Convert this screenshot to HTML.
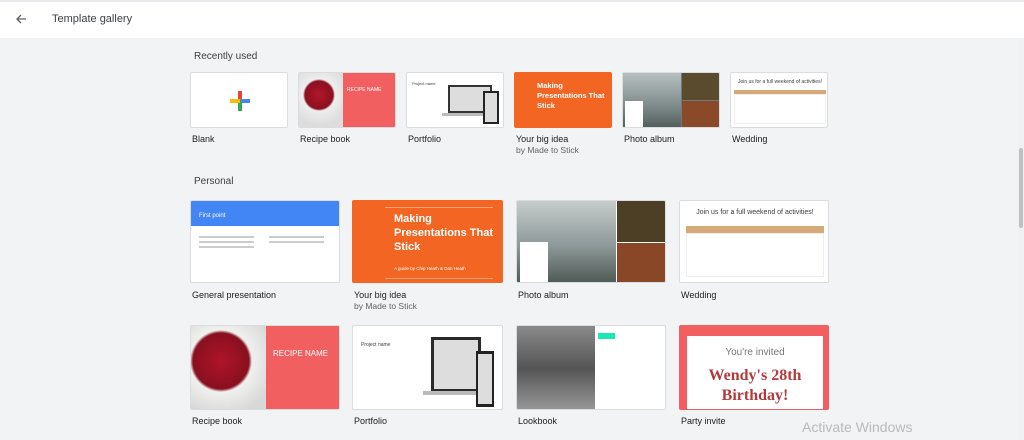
<!DOCTYPE html>
<html><head><meta charset="utf-8"><style>
*{margin:0;padding:0;box-sizing:border-box}
body{width:1024px;height:440px;overflow:hidden;background:#f1f3f4;font-family:"Liberation Sans",Arial,sans-serif;color:#3c4043;position:relative}
.top{position:absolute;left:0;top:0;width:1024px;height:2px;background:#e8eaed}
.hdr{position:absolute;left:0;top:2px;width:1024px;height:36px;background:#fff}
.hdr .t{position:absolute;left:52px;top:11px;font-size:11px;color:#3c4043}
.sec{position:absolute;left:194px;font-size:10px;color:#3c4043}
.c{position:absolute;background:#fff;border:1px solid #dadce0;border-radius:2px;overflow:hidden}
.l{position:absolute;font-size:9px;color:#202124}
.s{position:absolute;font-size:8.5px;color:#5f6368}
.sb{position:absolute;right:0;top:38px;width:6px;height:402px;background:#f1f1f1}
.sb div{position:absolute;left:1px;top:110px;width:4px;height:80px;background:#c1c1c1;border-radius:2px}
.ln{height:2px;background:#ccc;margin:3px 0}
</style></head><body>
<div class="top"></div>
<div class="hdr">
<svg style="position:absolute;left:15px;top:11px" width="12" height="12" viewBox="0 0 12 12"><path d="M11 6H2M6 2L2 6l4 4" stroke="#5f6368" stroke-width="1.3" fill="none"/></svg>
<div class="t">Template gallery</div></div>
<div class="sb"><div></div></div>
<div class="sec" style="top:51px">Recently used</div>
<div class="sec" style="top:176px">Personal</div>

<!-- Recently used -->
<div class="c" style="left:190px;top:72px;width:98px;height:56px">
<svg style="position:absolute;left:38px;top:17px" width="22" height="22" viewBox="0 0 22 22"><rect x="9" y="1" width="4" height="10" fill="#ea4335"/><rect x="11" y="9" width="10" height="4" fill="#4285f4"/><rect x="9" y="11" width="4" height="10" fill="#34a853"/><rect x="1" y="9" width="10" height="4" fill="#fbbc04"/></svg></div>
<div class="c" style="left:298px;top:72px;width:98px;height:56px;background:#f3e9e4">
<div style="position:absolute;left:0;top:0;width:44px;height:56px;background:radial-gradient(circle at 20px 22px,#b2162a 0,#8a1020 14px,#eee 16px,#ddd 30px)"></div>
<div style="position:absolute;left:44px;top:0;width:54px;height:56px;background:#f15f60;color:#fff;font-size:5px;padding:14px 4px">RECIPE NAME</div></div>
<div class="c" style="left:406px;top:72px;width:98px;height:56px">
<div style="position:absolute;left:5px;top:8px;font-size:4px">Project name</div>
<div style="position:absolute;left:41px;top:12px;width:44px;height:28px;background:#333;border:2px solid #333"><div style="background:#ddd;height:100%"></div></div>
<div style="position:absolute;left:35px;top:40px;width:55px;height:3px;background:#bbb"></div>
<div style="position:absolute;left:76px;top:18px;width:16px;height:33px;background:#222;border:2px solid #222"><div style="background:#ddd;height:100%"></div></div></div>
<div class="c" style="left:514px;top:72px;width:98px;height:56px;background:#f26522;border-color:#f26522">
<div style="position:absolute;left:22px;top:8px;color:#fff;font-size:7.5px;font-weight:bold;line-height:10px">Making<br>Presentations That<br>Stick</div></div>
<div class="c" style="left:622px;top:72px;width:98px;height:56px;background:#6f7a7c">
<div style="position:absolute;left:0;top:0;width:58px;height:56px;background:linear-gradient(#b7c0c1,#7e8a8a 60%,#4f5a58)"></div>
<div style="position:absolute;left:59px;top:0;width:39px;height:27px;background:#5a4a2e"></div>
<div style="position:absolute;left:59px;top:28px;width:39px;height:28px;background:#8a4a2a"></div>
<div style="position:absolute;left:2px;top:28px;width:18px;height:26px;background:#fff"></div></div>
<div class="c" style="left:730px;top:72px;width:98px;height:56px">
<div style="position:absolute;left:0;top:6px;width:98px;text-align:center;font-size:5px">Join us for a full weekend of activities!</div>
<div style="position:absolute;left:3px;top:17px;width:92px;height:4px;background:#d4aa78"></div>
<div style="position:absolute;left:3px;top:21px;width:92px;height:30px;border:1px solid #eee"></div></div>
<div class="l" style="left:192px;top:134px">Blank</div>
<div class="l" style="left:300px;top:134px">Recipe book</div>
<div class="l" style="left:408px;top:134px">Portfolio</div>
<div class="l" style="left:516px;top:134px">Your big idea</div>
<div class="s" style="left:516px;top:145px">by Made to Stick</div>
<div class="l" style="left:624px;top:134px">Photo album</div>
<div class="l" style="left:732px;top:134px">Wedding</div>

<!-- Personal row 1 -->
<div class="c" style="left:190px;top:200px;width:150px;height:83px">
<div style="height:25px;background:#4285f4;color:#fff;font-size:6px;padding:12px 8px">First point</div>
<div style="position:absolute;left:8px;top:32px;width:55px"><div class="ln"></div><div class="ln"></div><div class="ln"></div></div>
<div style="position:absolute;left:78px;top:32px;width:55px"><div class="ln"></div><div class="ln"></div></div></div>
<div class="c" style="left:352px;top:200px;width:151px;height:83px;background:#f26522;border-color:#f26522">
<div style="position:absolute;left:32px;top:6px;width:108px;height:1px;background:#f9a07a"></div>
<div style="position:absolute;left:41px;top:11px;color:#fff;font-size:11px;font-weight:bold;line-height:14px">Making<br>Presentations That<br>Stick</div>
<div style="position:absolute;left:41px;top:65px;color:#fff;font-size:4.5px">A guide by Chip Heath &amp; Dan Heath</div>
<div style="position:absolute;left:32px;top:77px;width:108px;height:1px;background:#f9a07a"></div></div>
<div class="c" style="left:516px;top:200px;width:150px;height:83px">
<div style="position:absolute;left:0;top:0;width:99px;height:83px;background:linear-gradient(#c6cccc,#8c9797 55%,#4d5854)"></div>
<div style="position:absolute;left:100px;top:0;width:50px;height:41px;background:#4d3f25"></div>
<div style="position:absolute;left:100px;top:42px;width:50px;height:41px;background:#8a4728"></div>
<div style="position:absolute;left:3px;top:41px;width:28px;height:40px;background:#fff"></div></div>
<div class="c" style="left:679px;top:200px;width:150px;height:83px">
<div style="position:absolute;left:0;top:8px;width:150px;text-align:center;font-size:7px">Join us for a full weekend of activities!</div>
<div style="position:absolute;left:6px;top:25px;width:138px;height:7px;background:#d4aa78"></div>
<div style="position:absolute;left:6px;top:32px;width:138px;height:44px;border:1px solid #eee"></div></div>
<div class="l" style="left:192px;top:290px">General presentation</div>
<div class="l" style="left:354px;top:290px">Your big idea</div>
<div class="s" style="left:354px;top:301px">by Made to Stick</div>
<div class="l" style="left:518px;top:290px">Photo album</div>
<div class="l" style="left:681px;top:290px">Wedding</div>

<!-- Personal row 2 -->
<div class="c" style="left:190px;top:325px;width:150px;height:85px;background:#e8e4e0">
<div style="position:absolute;left:0;top:0;width:75px;height:85px;background:radial-gradient(circle at 30px 35px,#b0142a 0,#88101f 28px,#f0f0ee 31px,#d8d8d6 55px)"></div>
<div style="position:absolute;left:75px;top:0;width:75px;height:85px;background:#f15f60;color:#fff;padding:23px 7px;font-size:8px">RECIPE NAME</div></div>
<div class="c" style="left:352px;top:325px;width:151px;height:85px">
<div style="position:absolute;left:8px;top:16px;font-size:5px">Project name</div>
<div style="position:absolute;left:78px;top:11px;width:50px;height:55px;background:#2a2a2a;padding:3px"><div style="background:#ddd;height:100%"></div></div>
<div style="position:absolute;left:70px;top:65px;width:70px;height:4px;background:#bbb"></div>
<div style="position:absolute;left:123px;top:25px;width:18px;height:56px;background:#222;padding:3px 2px"><div style="background:#ddd;height:100%"></div></div></div>
<div class="c" style="left:516px;top:325px;width:150px;height:85px">
<div style="position:absolute;left:0;top:0;width:78px;height:85px;background:linear-gradient(#8a8a8a,#555 50%,#999)"></div>
<div style="position:absolute;left:81px;top:7px;width:17px;height:6px;background:#1de9b6"></div></div>
<div class="c" style="left:679px;top:325px;width:150px;height:85px;background:#f15f60;border-color:#f15f60">
<div style="position:absolute;left:7px;top:10px;width:136px;height:75px;background:#fff;text-align:center">
<div style="font-size:10px;color:#777;margin-top:11px">You're invited</div>
<div style="font-family:'Liberation Serif',serif;font-weight:bold;color:#b23a3a;font-size:16px;line-height:20px;margin-top:8px">Wendy's 28th<br>Birthday!</div></div></div>
<div class="l" style="left:192px;top:416px">Recipe book</div>
<div class="l" style="left:354px;top:416px">Portfolio</div>
<div class="l" style="left:518px;top:416px">Lookbook</div>
<div class="l" style="left:681px;top:416px">Party invite</div>
<div style="position:absolute;left:802px;top:419px;font-size:14px;color:#b9babb">Activate Windows</div>
</body></html>
